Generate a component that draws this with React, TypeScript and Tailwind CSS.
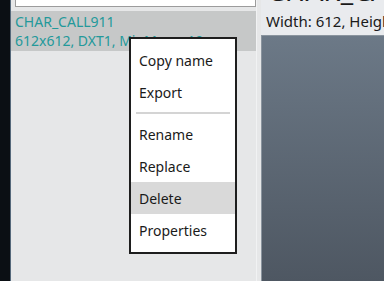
import React from "react";

const menuItems: (string | null)[] = [
  "Copy name",
  "Export",
  null,
  "Rename",
  "Replace",
  "Delete",
  "Properties",
];

const ContextMenu: React.FC<{ active: string }> = ({ active }) => (
  <div className="absolute left-[129px] top-[37px] w-[108px] border-2 border-[#1e1e1e] bg-white pt-[5px] pb-[6px] text-[14px] text-[#1a1a1a]">
    {menuItems.map((item, i) =>
      item === null ? (
        <div key={i} className="flex h-[10px] items-center px-[5px]">
          <div className="h-[2px] w-full bg-[#d4d4d4]" />
        </div>
      ) : (
        <div
          key={item}
          className={
            "flex h-[32px] items-center pl-[8px] " +
            (item === active ? "bg-[#d9d9d9]" : "")
          }
        >
          {item}
        </div>
      )
    )}
  </div>
);

export default function App() {
  return (
    <div className="relative flex h-[281px] w-[384px] overflow-hidden bg-[#e6e7e8] font-['Noto_Sans',sans-serif]">
      <div className="w-[10px] shrink-0 bg-[#0b0f14]" />
      <div className="w-px shrink-0 bg-[#55687a]" />

      {/* texture list */}
      <div className="flex w-[245px] shrink-0 flex-col">
        <div className="ml-[4px] h-[7px] border-x border-b border-[#9c9c9c] bg-white" />
        <div className="mt-[4px] flex h-[40px] flex-col justify-center overflow-hidden bg-[#c6c8c8] pl-[4px] text-[14px] leading-[19px] text-[#23999a]">
          <div className="whitespace-nowrap">CHAR_CALL911</div>
          <div className="whitespace-nowrap">612x612, DXT1, MipMaps: 10</div>
        </div>
      </div>
      <div className="w-px shrink-0 bg-[#f1f2f3]" />
      <div className="w-[4px] shrink-0" />

      {/* preview */}
      <div className="flex min-w-0 flex-1 flex-col overflow-hidden bg-[#e9ebee]">
        <div className="h-[5px] overflow-hidden">
          <div className="-mt-[25px] whitespace-nowrap pl-[6px] text-[28px] leading-[30px] text-[#1a1a1a]">
            CHAR_CALL911
          </div>
        </div>
        <div className="mt-[8px] whitespace-nowrap pl-[5px] text-[15px] leading-[16px] text-[#1a1a1a]">
          Width: 612, Height: 612
        </div>
        <div className="mt-[6px] flex-1 border-l border-t border-[#8a949e] bg-gradient-to-b from-[#6c7987] to-[#4e5762]" />
      </div>

      <ContextMenu active="Delete" />
    </div>
  );
}
